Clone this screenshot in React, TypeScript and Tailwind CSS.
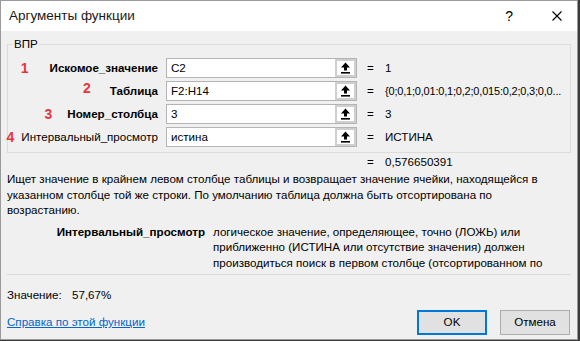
import React from "react";

const ARGS = [
  { n: "1", label: "Искомое_значение", bold: true, value: "C2", result: "1", gap: "mr-[21px]", shift: "", tight: false },
  { n: "2", label: "Таблица", bold: true, value: "F2:H14", result: "{0;0,1;0,01:0,1;0,2;0,015:0,2;0,3;0,0...", gap: "mr-[19px]", shift: "-translate-y-[3px]", tight: true },
  { n: "3", label: "Номер_столбца", bold: true, value: "3", result: "3", gap: "mr-[15px]", shift: "", tight: false },
  { n: "4", label: "Интервальный_просмотр", bold: false, value: "истина", result: "ИСТИНА", gap: "mr-[7px]", shift: "", tight: false },
];

function RefButton() {
  return (
    <div className="flex h-full w-[21px] shrink-0 bg-[#cfcfcf] p-[2px]">
      <div className="flex flex-1 items-center justify-center bg-white">
        <svg width="11" height="12" viewBox="0 0 11 12">
          <path d="M5.5 0.5 L10 5.5 H7 V8.5 H4 V5.5 H1 Z" fill="#000" />
          <rect x="1" y="10" width="9" height="1.6" fill="#000" />
        </svg>
      </div>
    </div>
  );
}

export default function App() {
  return (
    <div className="h-[341px] w-[580px] overflow-hidden bg-[#3a3a3a] font-['Liberation_Sans',sans-serif] text-[11.6px] text-black">
      <div className="flex h-[340px] w-[578px] flex-col border border-[#9a9a9a] bg-[#f0f0f0]">
        {/* заголовок */}
        <div className="flex h-[30px] shrink-0 items-center bg-white pl-[8px]">
          <span className="text-[13.5px] text-[#1a1a1a]">Аргументы функции</span>
          <span className="ml-auto mr-[39px] text-[14px]">?</span>
          <svg width="10" height="10" viewBox="0 0 10 10" className="mr-[15px]">
            <path d="M0.5 0.5 L9.5 9.5 M9.5 0.5 L0.5 9.5" stroke="#000" strokeWidth="1.1" />
          </svg>
        </div>

        <div className="flex flex-1 flex-col px-[6px]">
          <div className="relative mt-[13px] border border-[#dcdcdc] pb-[5px] pt-[13px]">
            <span className="absolute -top-[8px] left-[5px] bg-[#f0f0f0] px-[1px] leading-[14px]">ВПР</span>
            <div className="flex flex-col gap-[3px]">
              {ARGS.map((a) => (
                <div key={a.n} className="flex h-[20px] items-center">
                  <div className="flex w-[150px] shrink-0 items-center justify-end">
                    <span className={`${a.gap} ${a.shift} text-[14px] font-bold leading-none text-[#e8343c]`}>{a.n}</span>
                    <span className={a.bold ? "font-bold" : ""}>{a.label}</span>
                  </div>
                  <div className="ml-[8px] flex h-full w-[191px] shrink-0 border border-[#b4b4b4] bg-white">
                    <div className="flex flex-1 items-center pl-[4px]">{a.value}</div>
                    <RefButton />
                  </div>
                  <span className="ml-[10px] w-[18px] shrink-0">=</span>
                  <span className={a.tight ? "whitespace-nowrap text-[11px] tracking-[-0.2px]" : "whitespace-nowrap"}>{a.result}</span>
                </div>
              ))}
            </div>
          </div>

          <div className="mt-[1px] flex h-[16px] items-center pl-[360px]">
            <span className="w-[18px]">=</span>
            <span>0,576650391</span>
          </div>

          <div className="mt-[1px] whitespace-nowrap leading-[15.5px]">
            Ищет значение в крайнем левом столбце таблицы и возвращает значение ячейки, находящейся в
            <br />
            указанном столбце той же строки. По умолчанию таблица должна быть отсортирована по
            <br />
            возрастанию.
          </div>

          <div className="mt-[6px] flex h-[47px] shrink-0 overflow-hidden leading-[15.5px]">
            <div className="w-[198px] text-right font-bold">Интервальный_просмотр</div>
            <div className="ml-[8px] whitespace-nowrap">
              логическое значение, определяющее, точно (ЛОЖЬ) или
              <br />
              приближенно (ИСТИНА или отсутствие значения) должен
              <br />
              производиться поиск в первом столбце (отсортированном по
            </div>
          </div>

          <div className="mt-[3px] h-px shrink-0 bg-[#dadada]" />

          <div className="mt-[13px] flex h-[14px] items-center">
            <span className="w-[65px]">Значение:</span>
            <span>57,67%</span>
          </div>

          <div className="mt-[8px] flex items-center">
            <a href="#" className="text-[#0066cc] underline">
              Справка по этой функции
            </a>
            <button className="ml-auto h-[25px] w-[70px] border-2 border-[#0078d7] bg-[#e1e1e1]">OK</button>
            <button className="ml-[13px] mr-[1px] h-[25px] w-[70px] border border-[#adadad] bg-[#e1e1e1]">Отмена</button>
          </div>
        </div>
      </div>
    </div>
  );
}
